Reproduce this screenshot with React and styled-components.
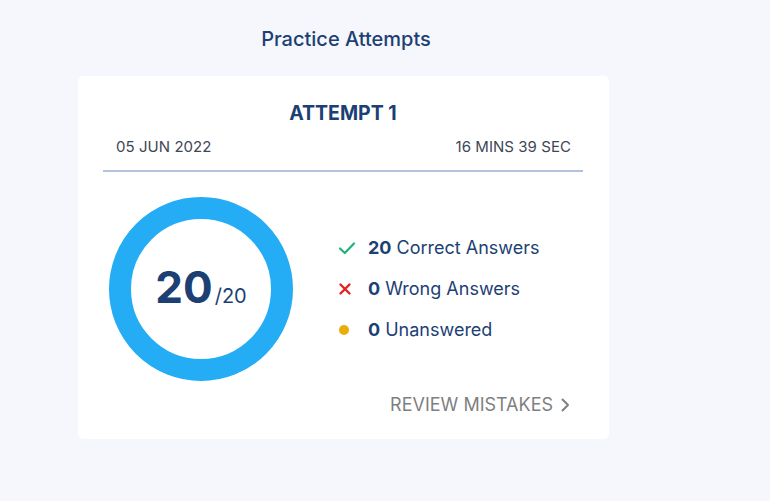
import React from 'react';
import styled, { createGlobalStyle } from 'styled-components';

const GlobalStyle = createGlobalStyle`
  html, body {
    margin: 0;
    padding: 0;
    background: #f5f7fc;
    font-family: Inter, 'Noto Sans', sans-serif;
  }
`;

const stats = [
  { kind: 'correct', count: 20, label: 'Correct Answers' },
  { kind: 'wrong', count: 0, label: 'Wrong Answers' },
  { kind: 'skipped', count: 0, label: 'Unanswered' },
];

function StatIcon({ kind }) {
  if (kind === 'correct') {
    return (
      <svg width="18" height="14" viewBox="0 0 18 14">
        <path d="M2 7.5 L6.8 12 L16 2.5" fill="none" stroke="#1fb477" strokeWidth="2.2" strokeLinecap="round" strokeLinejoin="round" />
      </svg>
    );
  }
  if (kind === 'wrong') {
    return (
      <svg width="14" height="14" viewBox="0 0 14 14">
        <path d="M2.5 2.5 L11.5 11.5 M11.5 2.5 L2.5 11.5" stroke="#e32222" strokeWidth="2.4" strokeLinecap="round" />
      </svg>
    );
  }
  return (
    <svg width="14" height="12" viewBox="0 0 14 12">
      <circle cx="6" cy="6" r="5" fill="#e8ae0c" />
    </svg>
  );
}

export default function App() {
  return (
    <>
      <GlobalStyle />
      <Page>
        <Title>Practice Attempts</Title>
        <Card>
          <AttemptName>ATTEMPT 1</AttemptName>
          <MetaRow>
            <span>05 JUN 2022</span>
            <span>16 MINS 39 SEC</span>
          </MetaRow>
          <Body>
            <Donut>
              <Score>20</Score>
              <Total>/20</Total>
            </Donut>
            <StatList>
              {stats.map((s) => (
                <Stat key={s.kind}>
                  <IconBox>
                    <StatIcon kind={s.kind} />
                  </IconBox>
                  <span>
                    <b>{s.count}</b> {s.label}
                  </span>
                </Stat>
              ))}
            </StatList>
          </Body>
          <Footer>
            <ReviewLink>
              REVIEW MISTAKES
              <svg width="12" height="16" viewBox="0 0 12 16">
                <path d="M3.5 2.5 L9 8 L3.5 13.5" fill="none" stroke="#7f7f7f" strokeWidth="2" strokeLinecap="round" strokeLinejoin="round" />
              </svg>
            </ReviewLink>
          </Footer>
        </Card>
      </Page>
    </>
  );
}

const Page = styled.div`
  width: 531px;
  margin-left: 78px;
  padding-top: 26px;
  display: flex;
  flex-direction: column;
`;

const Title = styled.h1`
  margin: 0 0 24px 5px;
  text-align: center;
  font-size: 20px;
  font-weight: 500;
  line-height: 26px;
  color: #1c3f74;
`;

const Card = styled.div`
  background: #fff;
  border-radius: 5px;
  padding: 25px 26px 23px 25px;
  height: 363px;
  box-sizing: border-box;
  display: flex;
  flex-direction: column;
`;

const AttemptName = styled.div`
  text-align: center;
  font-size: 19.5px;
  font-weight: 700;
  line-height: 24px;
  color: #1c3f74;
`;

const MetaRow = styled.div`
  display: flex;
  justify-content: space-between;
  padding: 12px 12px 14px 13px;
  border-bottom: 2px solid #b6c0df;
  font-size: 15px;
  letter-spacing: 0.05px;
  line-height: 19px;
  color: #404656;
`;

const Body = styled.div`
  display: flex;
  align-items: center;
  margin-top: 25px;
  margin-left: 6px;
`;

const Donut = styled.div`
  width: 184px;
  height: 184px;
  border-radius: 50%;
  border: 22px solid #24acf5;
  box-sizing: border-box;
  display: flex;
  align-items: baseline;
  justify-content: center;
  padding-top: 46px;
  color: #1c3f74;
`;

const Score = styled.span`
  font-size: 44px;
  font-weight: 700;
  line-height: 1;
`;

const Total = styled.span`
  font-size: 20px;
  margin-left: 2px;
`;

const StatList = styled.ul`
  list-style: none;
  margin: 0 0 0 45px;
  padding: 0;
  display: flex;
  flex-direction: column;
  gap: 17px;
`;

const Stat = styled.li`
  display: flex;
  align-items: center;
  font-size: 18px;
  line-height: 24px;
  color: #1c3f74;

  b {
    font-weight: 700;
  }
`;

const IconBox = styled.span`
  width: 30px;
  display: flex;
  align-items: center;
  justify-content: flex-start;
`;

const Footer = styled.div`
  margin-top: auto;
  display: flex;
  justify-content: flex-end;
  padding-right: 12px;
`;

const ReviewLink = styled.a`
  display: flex;
  align-items: center;
  gap: 6px;
  font-size: 18px;
  line-height: 22px;
  color: #7f7f7f;
  cursor: pointer;
`;
